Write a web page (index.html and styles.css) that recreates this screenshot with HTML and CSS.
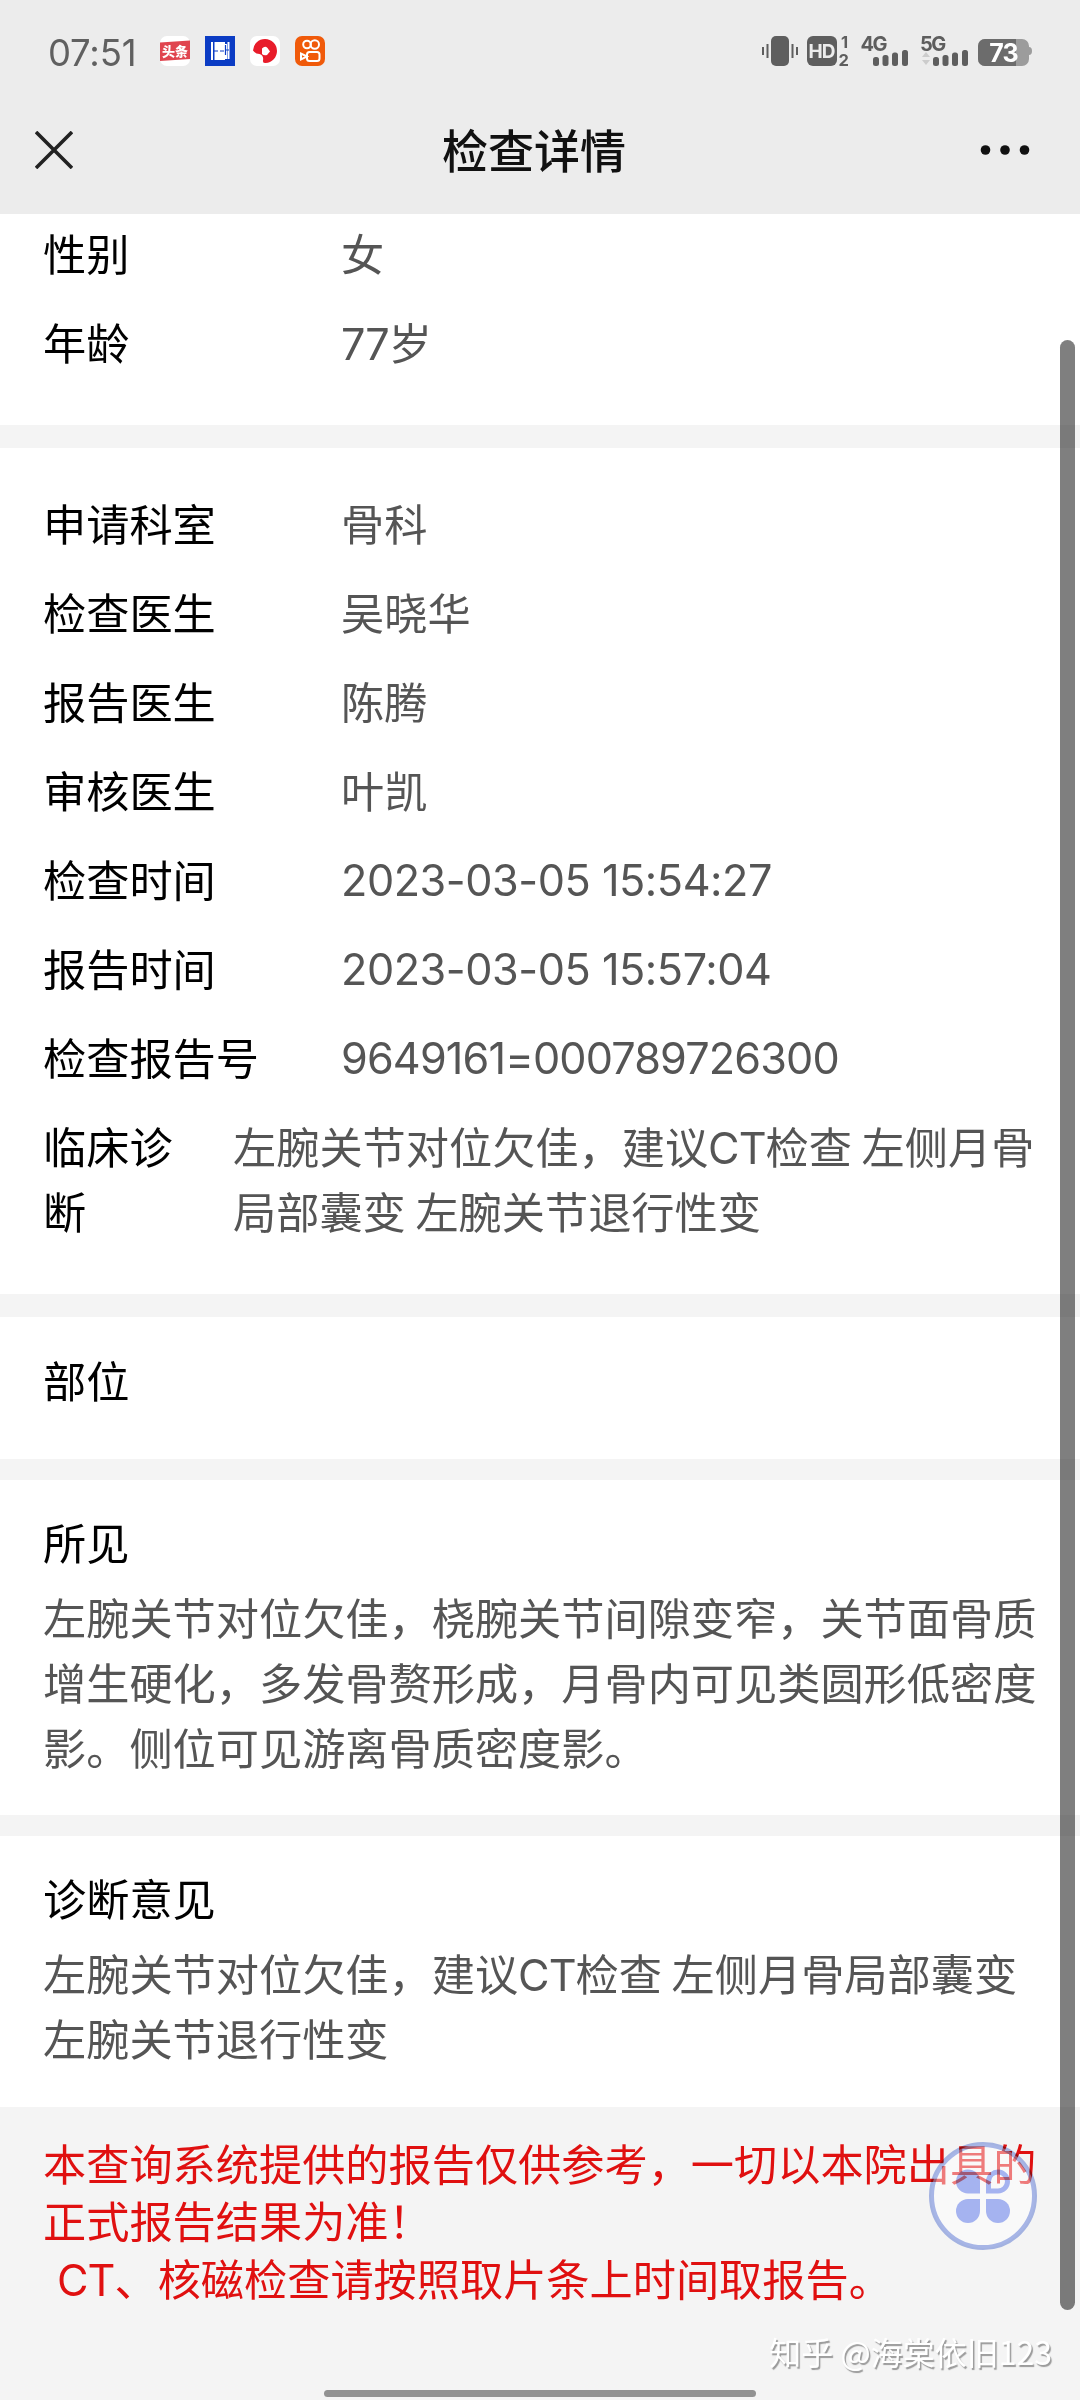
FILE: index.html
```html
<!DOCTYPE html>
<html lang="zh-CN">
  <head>
    <meta charset="UTF-8" />
    <meta name="viewport" content="width=device-width, initial-scale=1.0" />
    <title>检查详情</title>
    <link rel="stylesheet" href="styles.css">
  </head>
  <body>
    <header class="header">
      <div class="status-bar">
        <span class="clock">07:51</span>
        <div class="app-icons">
          <svg width="30" height="30" viewBox="0 0 30 30">
            <rect width="30" height="30" rx="7" fill="#fff" />
            <path d="M0 6.500L30 4.500V23L0 25Z" fill="#e0454f" />
            <text x="15" y="20" class="toutiao">头条</text>
          </svg>
          <svg width="30" height="30" viewBox="0 0 30 30">
            <rect width="30" height="30" fill="#0b3cc4" />
            <path d="M7 6V24M9.500 6h10.500v18H9.500zM20 8h2v15h-2z" fill="#fff" />
            <path d="M7 6V24M23.500 6V23" stroke="#fff" stroke-width="2" />
            <path d="M8 15h5M15 15h4M21 14h3M20.500 9v10" stroke="#0b3cc4" stroke-width="1.200" />
          </svg>
          <svg width="30" height="30" viewBox="0 0 30 30">
            <rect width="30" height="30" rx="7" fill="#fff" />
            <path d="M3 14.500a12 12 0 1 1 12.500 12.500q-3 0-2.500-2.500 1-5-3.500-6.500-4 0-6.500-3.500z" fill="#e81c2a" />
            <path d="M12 12.500q3-3 5.500-0.500l2.500 3.500-3 3.500q-3 1-5-1z" fill="#fff" />
          </svg>
          <svg width="30" height="30" viewBox="0 0 30 30">
            <rect width="30" height="30" rx="7" fill="#f05a0a" />
            <g fill="none" stroke="#fff" stroke-width="2">
              <circle cx="12" cy="8.500" r="3.800" />
              <circle cx="19.800" cy="8.500" r="4.200" />
              <rect x="12" y="16" width="12.500" height="9" rx="2.500" />
              <path d="M12 20.500L6 17.500v6z" />
            </g>
          </svg>
        </div>
        <svg class="system-icons" width="272" height="32" viewBox="0 0 272 32">
          <g fill="#5e5e5e">
            <rect x="9" y="1" width="18" height="30" rx="5" />
            <path d="M0 12h2v8h-2zM4.500 9h2v14h-2zM29.500 9h2v14h-2zM34 12h2v8h-2z" />
            <rect x="45" y="1" width="30" height="30" rx="6" />
            <text x="59.500" y="23" class="hd">HD</text>
            <text x="79" y="13" class="sim">1</text>
            <text x="76.500" y="30.500" class="sim">2</text>
            <text x="98.500" y="15.500" class="net">4G</text>
            <rect x="111" y="22" width="6" height="9" rx="2.500" />
            <rect x="120.500" y="20" width="6" height="11" rx="2.500" />
            <rect x="130" y="17.500" width="6" height="13.500" rx="2.500" />
            <rect x="140" y="15" width="6" height="16" rx="2.500" />
            <text x="158" y="15.500" class="net">5G</text>
            <rect x="171" y="22" width="6" height="9" rx="2.500" />
            <rect x="180.500" y="20" width="6" height="11" rx="2.500" />
            <rect x="190" y="17.500" width="6" height="13.500" rx="2.500" />
            <rect x="200" y="15" width="6" height="16" rx="2.500" />
            <path d="M160 22l4-5 4 5zM160 25l4 5 4-5z" fill="#ccc" />
          </g>
          <path d="M223 4h37a7 7 0 0 1 7 7v1q3 0 3 4t-3 4v4a7 7 0 0 1-7 7h-37a7 7 0 0 1-7-7V11a7 7 0 0 1 7-7z" fill="#9c9c9c" />
          <path d="M223 4h31v27h-31a7 7 0 0 1-7-7V11a7 7 0 0 1 7-7z" fill="#6c6c6c" />
          <text x="241.500" y="26.500" class="battery">73</text>
        </svg>
      </div>
      <div class="title-bar">
        <svg width="38" height="38" viewBox="0 0 38 38">
          <path d="M1 1L37 37M37 1L1 37" stroke="#222" stroke-width="3.600" />
        </svg>
        <h1 class="title">检查详情</h1>
        <svg width="50" height="10" viewBox="0 0 50 10">
          <circle cx="5.500" cy="5" r="4.800" fill="#111" />
          <circle cx="25" cy="5" r="4.800" fill="#111" />
          <circle cx="44.500" cy="5" r="4.800" fill="#111" />
        </svg>
      </div>
    </header>

    <main class="report">
      <section class="card patient">
        <div class="row"><span class="label">性别</span><span class="value">女</span></div>
        <div class="row"><span class="label">年龄</span><span class="value"><span class="latin">77</span>岁</span></div>
      </section>

      <section class="card exam">
        <div class="row"><span class="label">申请科室</span><span class="value">骨科</span></div>
        <div class="row"><span class="label">检查医生</span><span class="value">吴晓华</span></div>
        <div class="row"><span class="label">报告医生</span><span class="value">陈腾</span></div>
        <div class="row"><span class="label">审核医生</span><span class="value">叶凯</span></div>
        <div class="row"><span class="label">检查时间</span><span class="value date">2023-03-05 15:54:27</span></div>
        <div class="row"><span class="label">报告时间</span><span class="value date">2023-03-05 15:57:04</span></div>
        <div class="row"><span class="label">检查报告号</span><span class="value date report-no">9649161=000789726300</span></div>
        <div class="row row-long">
          <span class="label">临床诊断</span>
          <span class="value">左腕关节对位欠佳，建议<span class="latin">CT</span>检查 左侧月骨<br />局部囊变 左腕关节退行性变</span>
        </div>
      </section>

      <section class="card part">
        <h2 class="label">部位</h2>
      </section>

      <section class="card finding">
        <h2 class="label">所见</h2>
        <p class="text">左腕关节对位欠佳，桡腕关节间隙变窄，关节面骨质<br />增生硬化，多发骨赘形成，月骨内可见类圆形低密度<br />影。侧位可见游离骨质密度影。</p>
      </section>

      <section class="card opinion">
        <h2 class="label">诊断意见</h2>
        <p class="text">左腕关节对位欠佳，建议<span class="latin">CT</span>检查 左侧月骨局部囊变<br />左腕关节退行性变</p>
      </section>

      <p class="notice">本查询系统提供的报告仅供参考，一切以本院出具的<br />正式报告结果为准！<br /><span class="notice-ct"><span class="latin">CT</span>、核磁检查请按照取片条上时间取报告。</span></p>
    </main>

    <div class="float-disc"></div>
    <svg class="float-button" width="108" height="108" viewBox="0 0 108 108">
      <circle cx="54" cy="54" r="51.500" fill="none" stroke="#abbaec" stroke-width="5" />
      <g fill="#a9b8f6">
        <path d="M51 51.500V39a12 12 0 1 0-12 12.500z" />
        <path d="M51 57V69a12 12 0 1 1-12-12z" />
        <path d="M57 57V69a12 12 0 1 0 12-12z" />
      </g>
      <path d="M59.500 49V39a9.500 9.500 0 1 1 9.500 10z" fill="none" stroke="#a9b8f6" stroke-width="5" />
    </svg>
    <div class="scrollbar"></div>
    <div class="watermark">知乎 @海棠依旧123</div>
    <div class="home-bar"></div>
  </body>
</html>
```
FILE: styles.css
```css
* {
  box-sizing: border-box;
}

body {
  position: relative;
  margin: 0;
  width: 1080px;
  height: 2400px;
  overflow: hidden;
  background: #f4f4f4;
  color: #000;
  font-family: "Noto Sans CJK SC", sans-serif;
  font-size: 43.2px;
  line-height: 65px;
}

h1,
h2,
p {
  margin: 0;
  font-size: inherit;
  font-weight: 400;
}

.header {
  height: 214px;
  background: #ececec;
}

.status-bar {
  display: flex;
  align-items: center;
  height: 102px;
  padding: 0 46px 0 48px;
}

.clock {
  width: 112px;
  padding-top: 4px;
  color: #606060;
  font-family: Inter, sans-serif;
  font-size: 36.5px;
  letter-spacing: -0.2px;
}

.app-icons {
  display: flex;
  gap: 15px;
}

.system-icons {
  margin-left: auto;
  overflow: visible;
}

.toutiao {
  fill: #fff;
  font-size: 13px;
  font-weight: 900;
  text-anchor: middle;
}

.hd,
.sim,
.net,
.battery {
  font-family: Inter, sans-serif;
  font-weight: 700;
}

.hd {
  fill: #ececec;
  font-size: 19px;
  letter-spacing: -1px;
  text-anchor: middle;
}

.sim {
  font-size: 16.5px;
}

.net {
  font-size: 20px;
  letter-spacing: -1.5px;
}

.battery {
  fill: #fff;
  font-size: 25px;
  letter-spacing: -1px;
  text-anchor: middle;
}

.title-bar {
  display: flex;
  align-items: center;
  justify-content: space-between;
  height: 96px;
  padding: 0 50px 0 35px;
}

.title {
  margin: -4px 0 0 15px;
  color: #111;
  font-size: 46px;
  font-weight: 500;
}

.card {
  margin-bottom: 23px;
  padding: 0 43px;
  background: #fff;
}

.patient {
  height: 211px;
  padding-top: 6px;
}

.exam {
  height: 846px;
  padding-top: 42px;
}

.part {
  height: 142px;
  padding-top: 30px;
  margin-bottom: 21px;
}

.finding {
  height: 335px;
  padding-top: 29px;
  margin-bottom: 21px;
}

.opinion {
  height: 271px;
  padding-top: 29px;
  margin-bottom: 0;
}

.row {
  display: flex;
  margin-bottom: 24px;
}

.label {
  flex: none;
  width: 298px;
}

.value,
.text {
  color: #555;
  white-space: nowrap;
}

.latin {
  font-family: Inter, sans-serif;
  letter-spacing: -1px;
  line-height: 0;
}

.date {
  padding-top: 4px;
  font-family: Inter, sans-serif;
  letter-spacing: -0.45px;
  line-height: 61px;
}

.report-no {
  letter-spacing: -0.85px;
}

.row-long .label {
  width: 150px;
  margin-right: 40px;
}

.text {
  margin-top: 10px;
}

.notice {
  padding: 27px 43px 0;
  color: #e01010;
  line-height: 57.3px;
  white-space: nowrap;
}

.notice-ct {
  margin-left: 14px;
}

.float-disc {
  position: absolute;
  left: 931px;
  top: 2144px;
  width: 104px;
  height: 104px;
  border-radius: 50%;
  background: rgba(255, 255, 255, 0.45);
}

.float-button {
  position: absolute;
  left: 929px;
  top: 2142px;
  mix-blend-mode: multiply;
}

.scrollbar {
  position: absolute;
  left: 1060px;
  top: 340px;
  width: 15px;
  height: 1970px;
  border-radius: 8px;
  background: rgba(0, 0, 0, 0.5);
}

.watermark {
  position: absolute;
  right: 28px;
  top: 2321px;
  color: #fff;
  font-size: 32px;
  line-height: 60px;
  text-shadow: 1.5px 1.5px 1px #999;
}

.home-bar {
  position: absolute;
  left: 324px;
  top: 2390px;
  width: 432px;
  height: 7px;
  border-radius: 4px;
  background: #929292;
}
```
